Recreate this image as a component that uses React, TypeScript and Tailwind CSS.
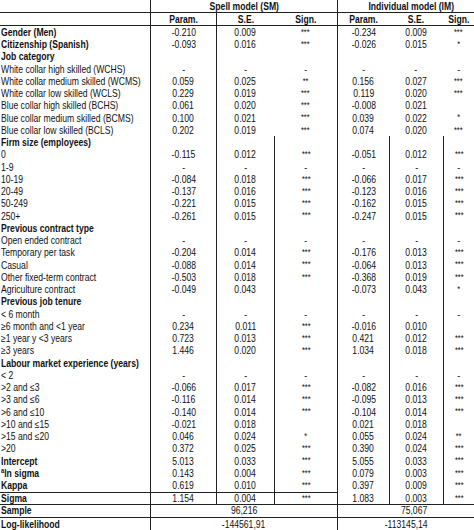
import clsx from "clsx"

type Row = {
  label: React.ReactNode
  bold?: boolean
  v?: string[]
}

const dash = ["-", "-", "-", "-", "-", "-"]

const rows: Row[] = [
  { label: "Gender (Men)", bold: true, v: ["-0.210", "0.009", "***", "-0.234", "0.009", "***"] },
  { label: "Citizenship (Spanish)", bold: true, v: ["-0.093", "0.016", "***", "-0.026", "0.015", "*"] },
  { label: "Job category", bold: true },
  { label: "White collar high skilled (WCHS)", v: dash },
  { label: "White collar medium skilled (WCMS)", v: ["0.059", "0.025", "**", "0.156", "0.027", "***"] },
  { label: "White collar low skilled (WCLS)", v: ["0.229", "0.019", "***", "0.119", "0.020", "***"] },
  { label: "Blue collar high skilled (BCHS)", v: ["0.061", "0.020", "***", "-0.008", "0.021", ""] },
  { label: "Blue collar medium skilled (BCMS)", v: ["0.100", "0.021", "***", "0.039", "0.022", "*"] },
  { label: "Blue collar low skilled (BCLS)", v: ["0.202", "0.019", "***", "0.074", "0.020", "***"] },
  { label: "Firm size (employees)", bold: true },
  { label: "0", v: ["-0.115", "0.012", "***", "-0.051", "0.012", "***"] },
  { label: "1-9", v: dash },
  { label: "10-19", v: ["-0.084", "0.018", "***", "-0.066", "0.017", "***"] },
  { label: "20-49", v: ["-0.137", "0.016", "***", "-0.123", "0.016", "***"] },
  { label: "50-249", v: ["-0.221", "0.015", "***", "-0.162", "0.015", "***"] },
  { label: "250+", v: ["-0.261", "0.015", "***", "-0.247", "0.015", "***"] },
  { label: "Previous contract type", bold: true },
  { label: "Open ended contract", v: dash },
  { label: "Temporary per task", v: ["-0.204", "0.014", "***", "-0.176", "0.013", "***"] },
  { label: "Casual", v: ["-0.088", "0.014", "***", "-0.064", "0.013", "***"] },
  { label: "Other fixed-term contract", v: ["-0.503", "0.018", "***", "-0.368", "0.019", "***"] },
  { label: "Agriculture contract", v: ["-0.049", "0.043", "", "-0.073", "0.043", "*"] },
  { label: "Previous job tenure", bold: true },
  { label: "< 6 month", v: dash },
  { label: "≥6 month and <1 year", v: ["0.234", "0.011", "***", "-0.016", "0.010", ""] },
  { label: "≥1 year y <3 years", v: ["0.723", "0.013", "***", "0.421", "0.012", "***"] },
  { label: "≥3 years", v: ["1.446", "0.020", "***", "1.034", "0.018", "***"] },
  { label: "Labour market experience (years)", bold: true },
  { label: "< 2", v: dash },
  { label: ">2 and ≤3", v: ["-0.066", "0.017", "***", "-0.082", "0.016", "***"] },
  { label: ">3 and ≤6", v: ["-0.116", "0.014", "***", "-0.095", "0.013", "***"] },
  { label: ">6 and  ≤10", v: ["-0.140", "0.014", "***", "-0.104", "0.014", "***"] },
  { label: ">10 and ≤15", v: ["-0.021", "0.018", "", "0.021", "0.018", ""] },
  { label: ">15 and  ≤20", v: ["0.046", "0.024", "*", "0.055", "0.024", "**"] },
  { label: ">20", v: ["0.372", "0.025", "***", "0.390", "0.024", "***"] },
  { label: "Intercept", bold: true, v: ["5.013", "0.033", "***", "5.055", "0.033", "***"] },
  {
    label: (
      <>
        <sup className="text-[7px]">a</sup>ln sigma
      </>
    ),
    bold: true,
    v: ["0.143", "0.004", "***", "0.079", "0.003", "***"],
  },
  { label: "Kappa", bold: true, v: ["0.619", "0.010", "***", "0.397", "0.009", "***"] },
]

const grid = "grid grid-cols-[150px_66px_58px_63px_52px_54px_31px]"
const line = "border-l border-[#222]"
// the scanned table uses a narrow sans, so squeeze Liberation Sans sideways
const narrow = "inline-block whitespace-nowrap scale-x-[0.82]"

function T({ children, left }: { children: React.ReactNode; left?: boolean }) {
  return <span className={clsx(narrow, left ? "origin-left" : "origin-center")}>{children}</span>
}

function Cell({ text, ruled }: { text: string; ruled: boolean }) {
  const star = text.startsWith("*")
  return (
    <div className={clsx("flex items-center justify-center", ruled && line)}>
      <span className={clsx(narrow, star && "text-[9px] leading-none")}>{text}</span>
    </div>
  )
}

export default function App() {
  return (
    <div
      className="w-[474px] h-[530px] overflow-hidden bg-white text-[10.5px] leading-none text-[#111]"
      style={{ fontFamily: '"Liberation Sans", Arial, sans-serif' }}
    >
      <div className={clsx(grid, "h-[13px] border-b border-[#222] font-bold")}>
        <div />
        <div className={clsx("col-span-3 flex items-center justify-center", line)}>
          <T>Spell model (SM)</T>
        </div>
        <div className={clsx("col-span-3 flex items-center justify-center pl-[11px]", line)}>
          <T>Individual model (IM)</T>
        </div>
      </div>
      <div className={clsx(grid, "h-[13px] border-b border-[#222] font-bold")}>
        <div />
        {["Param.", "S.E.", "Sign.", "Param.", "S.E.", "Sign."].map((h, i) => (
          <div
            key={i}
            className={clsx("flex items-center justify-center", (i === 0 || i === 1 || i === 3) && line)}
          >
            <T>{h}</T>
          </div>
        ))}
      </div>

      {rows.map((r, idx) => (
        <div key={idx} className={clsx(grid, "h-[12.25px]")}>
          <div className={clsx("flex items-center pl-[1px]", r.bold && "font-bold")}>
            <T left>{r.label}</T>
          </div>
          {(r.v ?? ["", "", "", "", "", ""]).map((t, i) => (
            // top rows only carry the outer column rules, from Firm size down all of them
            <Cell key={i} text={t} ruled={idx >= 9 || i === 0 || i === 1 || i === 3} />
          ))}
        </div>
      ))}

      <div className={clsx(grid, "h-[13px] border-b border-[#222]")}>
        <div className="flex items-center border-t border-[#222] pl-[1px] font-bold">
          <T left>Sigma</T>
        </div>
        {["1.154", "0.004", "***", "1.083", "0.003", "***"].map((t, i) => (
          <div
            key={i}
            className={clsx("flex items-center justify-center", line, i < 3 ? "border-t" : "pt-[1px]")}
          >
            <span className={clsx(narrow, t.startsWith("*") && "text-[9px] leading-none")}>{t}</span>
          </div>
        ))}
      </div>

      <div className={clsx(grid, "h-[13px] border-b border-[#222]")}>
        <div className="flex items-center pl-[1px] font-bold">
          <T left>Sample</T>
        </div>
        <div className={clsx("col-span-3 flex items-center justify-center", line)}>
          <T>96,216</T>
        </div>
        <div className={clsx("col-span-3 flex items-center justify-center pl-[17px]", line)}>
          <T>75,067</T>
        </div>
      </div>
      <div className={clsx(grid, "h-[12.5px]")}>
        <div className="flex items-center pl-[1px] font-bold">
          <T left>Log-likelihood</T>
        </div>
        <div className={clsx("col-span-3 flex items-center justify-center", line)}>
          <T>-144561,91</T>
        </div>
        <div className={clsx("col-span-3 flex items-center justify-center", line)}>
          <T>-113145,14</T>
        </div>
      </div>
    </div>
  )
}
